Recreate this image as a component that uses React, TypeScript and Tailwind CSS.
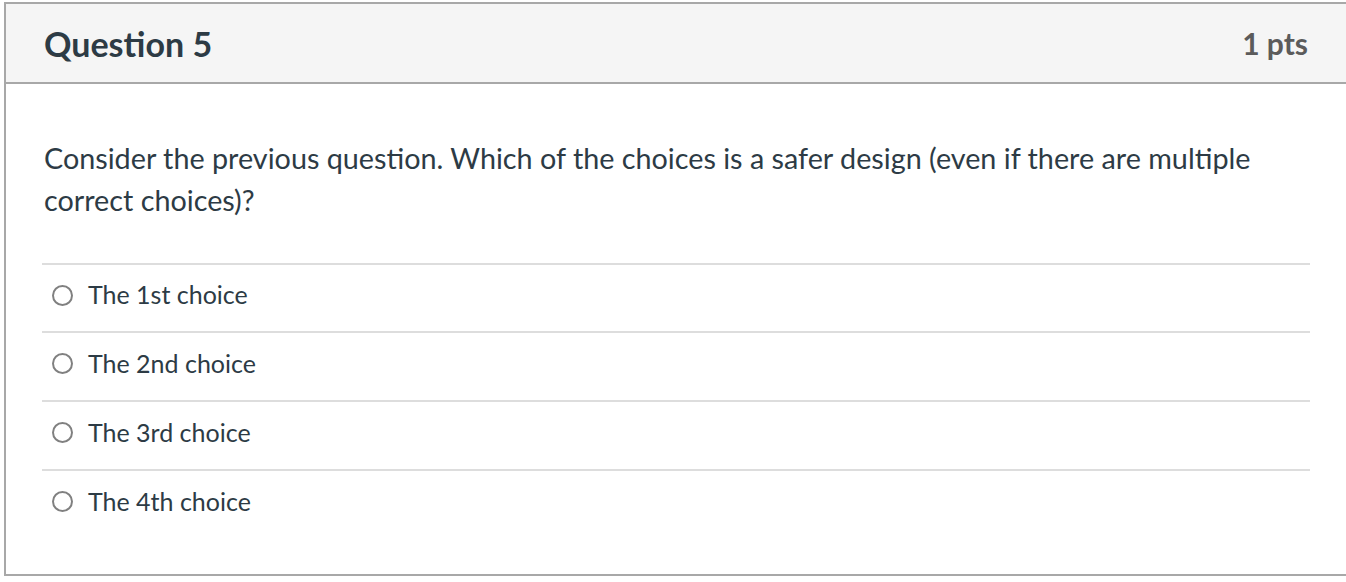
import React from "react";

const choices = [
  { label: "The 1st choice", h: "h-[68px]" },
  { label: "The 2nd choice", h: "h-[69px]" },
  { label: "The 3rd choice", h: "h-[69px]" },
  { label: "The 4th choice", h: "h-[69px]" },
];

export default function App() {
  return (
    <div className="w-[1346px] h-[582px] overflow-hidden bg-white pt-[2px] pl-[4px]" style={{ fontFamily: "Lato, 'Open Sans', sans-serif" }}>
      <div className="w-[1342px] border-2 border-r-0 border-[#a8a8a8]">
        <div className="h-[80px] bg-[#f5f5f5] border-b-2 border-[#a8a8a8] flex items-center justify-between px-[36px]">
          <div className="text-[34px] font-bold text-[#2d3b45] pl-[2px]">Question 5</div>
          <div className="text-[30px] font-bold text-[#5b5b5b] pr-[2px]">1 pts</div>
        </div>
        <div className="h-[490px] px-[36px] pt-[53px]">
          <div className="text-[28.75px] leading-[42px] text-[#2d3b45] pl-[2px]">
            Consider the previous question. Which of the choices is a safer design (even if there are multiple correct choices)?
          </div>
          <div className="mt-[42px]">
            {choices.map((c) => (
              <div key={c.label} className={`${c.h} border-t-2 border-[#dddddd] flex items-center pl-[10px] pb-[6px]`}>
                <span className="w-[21px] h-[21px] rounded-full border-2 border-[#808080] shrink-0" />
                <span className="ml-[15px] text-[25px] text-[#2d3b45]">{c.label}</span>
              </div>
            ))}
          </div>
        </div>
      </div>
    </div>
  );
}
